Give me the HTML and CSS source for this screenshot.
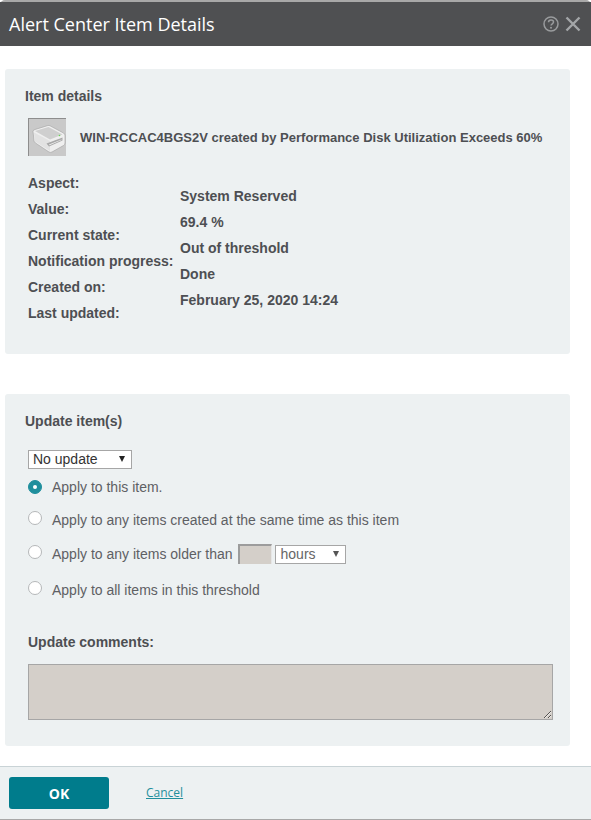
FILE: index.html
```html
<!DOCTYPE html>
<html lang="en">
<head>
<meta charset="utf-8">
<title>Alert Center Item Details</title>
<link rel="stylesheet" href="styles.css">
</head>
<body>
<div class="dialog">
  <header class="titlebar">
    <h1 class="title">Alert Center Item Details</h1>
    <div class="title-icons">
      <svg class="help" width="16" height="16" viewBox="0 0 16 16" aria-hidden="true">
        <circle cx="8" cy="8" r="7" fill="none" stroke="#999b9d" stroke-width="1.5"/>
        <path d="M5.5 6.300c0-1.500 1.100-2.300 2.500-2.300s2.500.8 2.500 2.100c0 1.700-2.500 1.700-2.500 3.500" fill="none" stroke="#999b9d" stroke-width="1.500"/>
        <circle cx="8" cy="11.700" r="1" fill="#999b9d"/>
      </svg>
      <svg class="close" width="16" height="16" viewBox="0 0 16 16" aria-hidden="true">
        <path d="M1.500 1.500l13 13M14.500 1.500l-13 13" fill="none" stroke="#a3a6a8" stroke-width="2.400"/>
      </svg>
    </div>
  </header>

  <main class="content">
    <section class="panel panel-details">
      <h2 class="panel-title">Item details</h2>
      <div class="summary">
        <div class="disk-tile">
          <svg width="37" height="37" viewBox="0 0 37 37" aria-hidden="true">
            <path d="M4 12.500Q4 11 6 10.500L19 6.500Q20 6.200 21 6.800L34.500 14Q36 15 36 16.500V24Q36 25.500 34.500 26.500L23 33Q21.500 33.800 20 33L6.500 24Q5 23 5 21.500z" fill="#efefef" stroke="#9f9f9f" stroke-width=".6"/>
            <path d="M6 12L19.500 8 33.500 15.500 21 20.500z" fill="#cfcfcf"/>
            <path d="M5 13.500L21 22V32L6 22.500z" fill="#e2e2e2"/>
            <path d="M17.500 24.500L33.500 18.500V21.500L20 27.500z" fill="#a9a9a9"/>
            <path d="M20 25.500L32.500 20.500V21L20.500 26.200z" fill="#f3f3f3"/>
            <circle cx="30.500" cy="16.500" r=".8" fill="#63d84f"/>
          </svg>
        </div>
        <p class="summary-text">WIN-RCCAC4BGS2V created by Performance Disk Utilization Exceeds 60%</p>
      </div>
      <div class="facts">
        <ul class="fact-labels">
          <li>Aspect:</li>
          <li>Value:</li>
          <li>Current state:</li>
          <li>Notification progress:</li>
          <li>Created on:</li>
          <li>Last updated:</li>
        </ul>
        <ul class="fact-values">
          <li>System Reserved</li>
          <li>69.4 %</li>
          <li>Out of threshold</li>
          <li>Done</li>
          <li>February 25, 2020 14:24</li>
        </ul>
      </div>
    </section>

    <section class="panel panel-update">
      <h2 class="panel-title">Update item(s)</h2>
      <div class="select select-update"><span>No update</span><i class="arrow"></i></div>
      <div class="radios">
        <div class="radio-row"><span class="radio radio-on"></span><span>Apply to this item.</span></div>
        <div class="radio-row"><span class="radio"></span><span>Apply to any items created at the same time as this item</span></div>
        <div class="radio-row">
          <span class="radio"></span><span>Apply to any items older than</span>
          <span class="num-input"></span>
          <div class="select select-hours"><span>hours</span><i class="arrow arrow-grey"></i></div>
        </div>
        <div class="radio-row"><span class="radio"></span><span>Apply to all items in this threshold</span></div>
      </div>
      <label class="comments-label" for="comments">Update comments:</label>
      <textarea id="comments" class="comments"></textarea>
    </section>
  </main>

  <footer class="footer">
    <button class="ok" type="button">OK</button>
    <a class="cancel" href="#">Cancel</a>
  </footer>
</div>
</body>
</html>
```
FILE: styles.css
```css
* { box-sizing: border-box; }
html, body { margin: 0; height: 100%; }
body {
  background: #fff;
  font-family: "Liberation Sans", Arial, sans-serif;
  font-size: 14px;
  color: #4d4f53;
  overflow: hidden;
}
.dialog {
  width: 591px;
  height: 820px;
  display: flex;
  flex-direction: column;
  border-top: 2px solid #a8a8a8;
  border-radius: 5px 5px 0 0;
}
.titlebar {
  height: 44px;
  flex: none;
  background: #4f5052;
  display: flex;
  align-items: center;
  justify-content: space-between;
  padding: 0 10px 0 9px;
}
.title {
  margin: 0;
  font: 400 18px/24px "Open Sans", sans-serif;
  color: #fff;
}
.title-icons { display: flex; align-items: center; gap: 6px; }
.title-icons svg { display: block; }
.content {
  flex: 1;
  padding: 23px 21px 20px 5px;
  display: flex;
  flex-direction: column;
  gap: 40px;
}
.panel {
  background: #edf1f2;
  border-radius: 3px;
  padding: 0 17px 0 20px;
}
.panel-details { height: 285px; padding-top: 19px; }
.panel-update { height: 352px; padding-top: 19px; }
.panel-title {
  margin: 0;
  font-size: 14px;
  line-height: 16px;
  font-weight: 700;
  color: #4d4f53;
}
.summary {
  margin: 14px 0 0 3px;
  display: flex;
  align-items: center;
  height: 38px;
}
.disk-tile {
  width: 38px;
  height: 38px;
  flex: none;
  background: #c9c9c9;
  border-left: 1px solid #8d8d8d;
  border-top: 1px solid #8d8d8d;
}
.disk-tile svg { display: block; }
.summary-text {
  margin: 0 0 0 14px;
  font-size: 13px;
  font-weight: 700;
  white-space: nowrap;
}
.facts { display: flex; margin: 14px 0 0 3px; font-weight: 700; }
.fact-labels, .fact-values { list-style: none; margin: 0; padding: 0; }
.fact-labels li, .fact-values li { height: 26px; line-height: 26px; white-space: nowrap; }
.fact-labels { width: 152px; }
.fact-values { margin-top: 13px; }
.select {
  background: #fff;
  border: 1px solid #a6a6a6;
  display: flex;
  align-items: center;
  justify-content: space-between;
  height: 19px;
  white-space: nowrap;
}
.select-update {
  width: 104px;
  margin: 21px 0 0 3px;
  padding: 0 6px 1px 4px;
  color: #333;
}
.select-hours {
  width: 71px;
  margin-left: 3px;
  padding: 0 6px 0 5px;
  font-size: 14px;
  color: #666;
}
.arrow {
  width: 0;
  height: 0;
  border-left: 3.500px solid transparent;
  border-right: 3.500px solid transparent;
  border-top: 6px solid #222;
}
.arrow-grey { border-top-color: #555; }
.radios { margin: 8px 0 0 3px; color: #5e6064; }
.radio-row { display: flex; align-items: center; height: 20px; margin-bottom: 14px; white-space: nowrap; }
.radio-row:first-child { margin-bottom: 13px; }
.radio-row:nth-child(3) { margin-bottom: 16px; }
.radio {
  width: 14px;
  height: 14px;
  flex: none;
  border-radius: 50%;
  background: #fff;
  border: 1px solid #b5b7b9;
  margin: -4px 10px 0 0;
}
.radio-on {
  background: #1f8f9d;
  border-color: #1f8f9d;
  position: relative;
  margin-top: 0;
}
.radio-on::after {
  content: "";
  position: absolute;
  left: 4px;
  top: 4px;
  width: 4px;
  height: 4px;
  border-radius: 50%;
  background: #fff;
}
.num-input {
  width: 34px;
  height: 20px;
  margin-left: 5px;
  background: #d4cfc9;
  border-top: 2px solid #9c9c9c;
  border-left: 2px solid #9c9c9c;
  border-right: 1px solid #e6e6e6;
}
.comments-label {
  display: block;
  margin: 34px 0 0 3px;
  font-weight: 700;
  line-height: 16px;
}
.comments {
  display: block;
  width: 525px;
  height: 56px;
  margin: 14px 0 0 3px;
  background: #d4cfc9;
  border: 1px solid #a6a6a6;
  border-radius: 0;
  outline: none;
}
.footer {
  height: 54px;
  flex: none;
  background: #edf1f2;
  border-top: 1px solid #c9d3d6;
  border-bottom: 1px solid #a8a8a8;
  display: flex;
  align-items: center;
  padding: 0 0 2px 9px;
}
.ok {
  width: 100px;
  height: 32px;
  margin-top: 2px;
  background: #007c8c;
  color: #fff;
  border: 0;
  border-radius: 3px;
  font: 700 14px "Open Sans", sans-serif;
}
.cancel {
  margin-left: 37px;
  font: 400 12px "Open Sans", sans-serif;
  color: #1f8f9d;
  text-decoration: underline;
}
```
